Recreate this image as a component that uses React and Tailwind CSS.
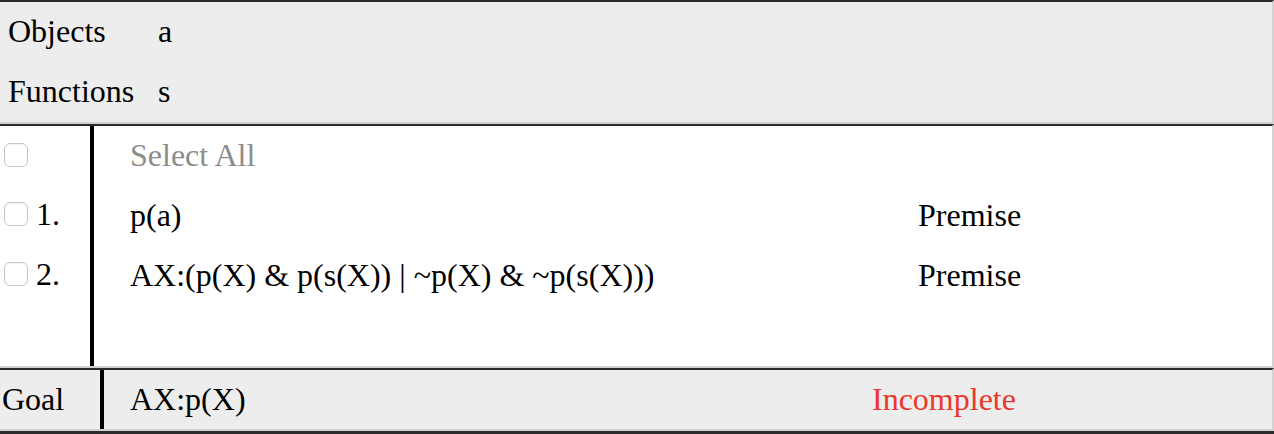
const Checkbox = () => (
  <span className="inline-block w-6 h-6 rounded-[6px] border border-[#c6c6c6] bg-white shadow-[inset_0_1px_1px_rgba(0,0,0,0.04)]" />
);

const proofLines = [
  { n: '1.', formula: 'p(a)', reason: 'Premise' },
  { n: '2.', formula: 'AX:(p(X) & p(s(X)) | ~p(X) & ~p(s(X)))', reason: 'Premise' },
];

export default function App() {
  return (
    <div className="w-[1274px] h-[434px] overflow-hidden bg-white text-black text-[32px] font-['Liberation_Serif',serif]">
      {/* Signature */}
      <div className="bg-[#ededed] border-t-2 border-t-[#2b2b2b] border-b-2 border-b-[#d2d2d2] border-r-2 border-r-[#d2d2d2] pl-2">
        <div className="flex h-[58px] leading-[58px]">
          <span className="w-[150px]">Objects</span>
          <span>a</span>
        </div>
        <div className="flex h-[62px] leading-[62px]">
          <span className="w-[150px]">Functions</span>
          <span>s</span>
        </div>
      </div>

      {/* Proof */}
      <div className="flex h-[244px] border-t-2 border-t-[#2b2b2b] border-b-2 border-b-[#d2d2d2] border-r-2 border-r-[#d2d2d2]">
        <div className="w-[90px] shrink-0 pl-1">
          <div className="flex items-center h-[58px]">
            <Checkbox />
          </div>
          {proofLines.map((l) => (
            <div key={l.n} className="flex items-center gap-2 h-[60px] leading-[58px]">
              <Checkbox />
              <span>{l.n}</span>
            </div>
          ))}
        </div>
        <div className="flex-1 border-l-4 border-black pl-9">
          <div className="h-[60px] leading-[58px] text-[#8c8c8c]">Select All</div>
          {proofLines.map((l) => (
            <div key={l.n} className="flex h-[60px] leading-[58px]">
              <span className="w-[788px] shrink-0 whitespace-pre">{l.formula}</span>
              <span>{l.reason}</span>
            </div>
          ))}
        </div>
      </div>

      {/* Goal */}
      <div className="flex h-[63px] bg-[#ededed] border-t-2 border-t-[#2b2b2b] border-b-2 border-b-[#d2d2d2] border-r-2 border-r-[#d2d2d2]">
        <div className="w-[100px] shrink-0 pl-0.5 leading-[59px]">Goal</div>
        <div className="flex flex-1 border-l-4 border-black pl-[26px] leading-[59px]">
          <span className="w-[742px] shrink-0">AX:p(X)</span>
          <span className="text-[#e8392c]">Incomplete</span>
        </div>
      </div>
      <div className="border-t-[3px] border-t-[#2b2b2b] bg-[#ededed] h-4" />
    </div>
  );
}
